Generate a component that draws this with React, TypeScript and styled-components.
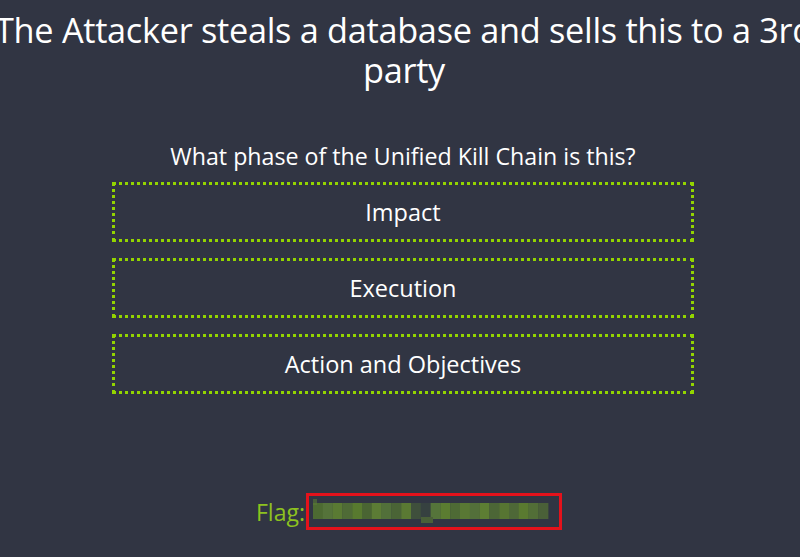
import React from 'react';
import styled, { createGlobalStyle } from 'styled-components';

const GlobalStyle = createGlobalStyle`
    html, body {
        margin: 0;
        padding: 0;
        background: #313543;
        overflow: hidden;
    }
    body {
        font-family: "Open Sans", "Noto Sans", sans-serif;
        color: #ffffff;
    }
`;

const Page = styled.main`
    height: 557px;
    display: flex;
    flex-direction: column;
    align-items: center;
    padding-top: 10px;
    box-sizing: border-box;
`;

const Title = styled.h1`
    margin: 0 -20px;
    width: 840px;
    font-size: 34.3px;
    line-height: 40px;
    font-weight: 400;
    text-align: center;
    letter-spacing: -0.3px;
    transform: translateX(4px);
`;

const Question = styled.p`
    margin: 52px 0 0;
    font-size: 23.2px;
    line-height: 28px;
    text-align: center;
    transform: translateX(3px);
`;

const Options = styled.div`
    margin-top: 12px;
    display: flex;
    flex-direction: column;
    gap: 16px;
    width: 582px;
    transform: translateX(3px);
`;

const Option = styled.button`
    height: 60px;
    border: 3px dotted #93d500;
    background: transparent;
    color: #ffffff;
    font-family: inherit;
    font-size: 23.5px;
    cursor: pointer;
`;

const FlagRow = styled.div`
    margin-top: auto;
    margin-bottom: 27px;
    display: flex;
    align-items: center;
    gap: 1px;
    transform: translateX(9px);
`;

const FlagLabel = styled.span`
    color: #8dc21f;
    font-size: 23px;
`;

const Redacted = styled.div`
    width: 256px;
    height: 37px;
    box-sizing: border-box;
    border: 3px solid #e4121b;
    display: flex;
    align-items: center;
    padding: 0 4px;
`;

// blurred flag mosaic
const cells = [
    '#4d6a32', '#55733a', '#5a7a33', '#4f6b36', '#587a2f', '#4a6533', '#5c7c35', '#52703a',
    '#4a6436', '#5a7933', '#3f4f3c', '#364140', '#55743a', '#5b7c31', '#4e6a35', '#597834',
    '#536f3a', '#5d7e33', '#4c6636', '#577532', '#4e6837', '#5a7a30', '#526e37', '#4a6038',
];

const Mosaic = () => (
    <svg width="236" height="26" viewBox="0 0 236 26">
        {cells.map((c, i) => (
            <rect key={i} x={i * 9.8} y={4} width={10} height={16} fill={c} />
        ))}
        <rect x={0} y={0} width={4} height={6} fill="#5a7a36" opacity={0.6} />
        <rect x={108} y={18} width={12} height={6} fill="#4a6038" />
    </svg>
);

const answers = ['Impact', 'Execution', 'Action and Objectives'];

export default function App() {
    return (
        <>
            <GlobalStyle />
            <Page>
                <Title>The Attacker steals a database and sells this to a 3rd party</Title>
                <Question>What phase of the Unified Kill Chain is this?</Question>
                <Options>
                    {answers.map(a => (
                        <Option key={a}>{a}</Option>
                    ))}
                </Options>
                <FlagRow>
                    <FlagLabel>Flag:</FlagLabel>
                    <Redacted>
                        <Mosaic />
                    </Redacted>
                </FlagRow>
            </Page>
        </>
    );
}
